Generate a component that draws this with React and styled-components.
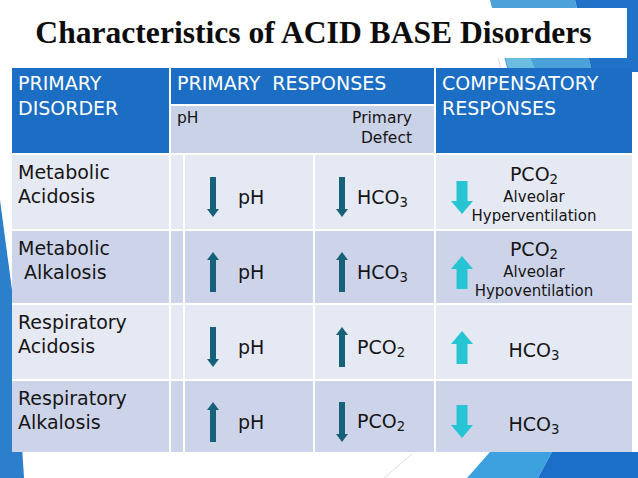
import React from "react";
import styled, { createGlobalStyle } from "styled-components";

const GlobalStyle = createGlobalStyle`
    * { box-sizing: border-box; }
    body {
        margin: 0;
        background: #fff;
    }
`;

const rows = [
    {
        name: ["Metabolic", "Acidosis"],
        ph: "down",
        defect: { dir: "down", chem: ["HCO", "3"] },
        comp: { dir: "down", chem: ["PCO", "2"], note: ["Alveolar", "Hyperventilation"] },
    },
    {
        name: ["Metabolic", " Alkalosis"],
        ph: "up",
        defect: { dir: "up", chem: ["HCO", "3"] },
        comp: { dir: "up", chem: ["PCO", "2"], note: ["Alveolar", "Hypoventilation"] },
    },
    {
        name: ["Respiratory", "Acidosis"],
        ph: "down",
        defect: { dir: "up", chem: ["PCO", "2"] },
        comp: { dir: "up", chem: ["HCO", "3"] },
    },
    {
        name: ["Respiratory", "Alkalosis"],
        ph: "up",
        defect: { dir: "down", chem: ["PCO", "2"] },
        comp: { dir: "down", chem: ["HCO", "3"] },
    },
];

function ThinArrow({ dir }) {
    const d = dir === "down"
        ? "M3 0 H9 V32 H12 L6 40 L0 32 H3 Z"
        : "M6 0 L12 8 H9 V40 H3 V8 H0 Z";
    return (
        <svg width="12" height="40" viewBox="0 0 12 40">
            <path d={d} fill="#17607a" />
        </svg>
    );
}

function FatArrow({ dir }) {
    const d = dir === "down"
        ? "M5.5 0 H16.5 V20 H22 L11 33 L0 20 H5.5 Z"
        : "M11 0 L22 13 H16.5 V33 H5.5 V13 H0 Z";
    return (
        <svg width="22" height="33" viewBox="0 0 22 33">
            <path d={d} fill="#27c5d3" />
        </svg>
    );
}

function Chem({ parts }) {
    return (
        <ChemLine>
            {parts[0]}
            <Sub>{parts[1]}</Sub>
        </ChemLine>
    );
}

function Decor() {
    return (
        <DecorSvg viewBox="0 0 638 478" width="638" height="478">
            {/* top right */}
            <polygon points="490,0 575,0 592,72 508,72" fill="#4aa2d8" />
            <polygon points="505,56 530,56 536,72 509,72" fill="#6cbde0" />
            <polygon points="575,0 638,0 638,72 592,72" fill="#1f72c7" />
            <line x1="497" y1="52" x2="501" y2="70" stroke="#d8dde3" strokeWidth="1" />
            {/* left wedge */}
            <polygon points="0,200 12,290 24,478 0,478" fill="#2c7fcb" />
            {/* bottom right */}
            <polygon points="490,452 552,452 538,478 467,478" fill="#3ca1de" />
            <polygon points="552,452 638,452 638,478 538,478" fill="#1b6fc8" />
            <line x1="384" y1="478" x2="412" y2="454" stroke="#dcdfe4" strokeWidth="1" />
        </DecorSvg>
    );
}

function App() {
    return (
        <>
            <GlobalStyle />
            <Slide>
                <Decor />
                <Content>
                    <TitleBand>
                        <Title>Characteristics of ACID BASE Disorders</Title>
                    </TitleBand>

                    <Table>
                        <HeadCell $col="1" $row="1 / span 2">
                            PRIMARY<br />DISORDER
                        </HeadCell>
                        <HeadCell $col="2 / span 3" $row="1">
                            PRIMARY&nbsp;&nbsp;RESPONSES
                        </HeadCell>
                        <SubHead>
                            <span>pH</span>
                            <SubRight>Primary<br />Defect</SubRight>
                        </SubHead>
                        <HeadCell $col="5" $row="1 / span 2">
                            COMPENSATORY<br />RESPONSES
                        </HeadCell>

                        {rows.map((r, i) => {
                            const shade = i % 2 === 1;
                            return (
                                <React.Fragment key={i}>
                                    <DisorderCell $shade={shade}>
                                        {r.name[0]}{"\n"}{r.name[1]}
                                    </DisorderCell>
                                    <Cell $shade={shade} />
                                    <ResponseCell $shade={shade} $pad={22} $gap={19}>
                                        <ThinArrow dir={r.ph} />
                                        <span>pH</span>
                                    </ResponseCell>
                                    <ResponseCell $shade={shade} $pad={21} $gap={9}>
                                        <ThinArrow dir={r.defect.dir} />
                                        <Chem parts={r.defect.chem} />
                                    </ResponseCell>
                                    <CompCell $shade={shade}>
                                        <CompArrow>
                                            <FatArrow dir={r.comp.dir} />
                                        </CompArrow>
                                        <CompText $withNote={!!r.comp.note}>
                                            <Chem parts={r.comp.chem} />
                                            {r.comp.note && r.comp.note.map((n) => (
                                                <Note key={n}>{n}</Note>
                                            ))}
                                        </CompText>
                                    </CompCell>
                                </React.Fragment>
                            );
                        })}
                    </Table>
                </Content>
            </Slide>
        </>
    );
}

const Slide = styled.div`
    position: relative;
    width: 638px;
    height: 478px;
    overflow: hidden;
    background: #fff;
    font-family: "DejaVu Sans", sans-serif;
    color: #151515;
`;

const DecorSvg = styled.svg`
    position: absolute;
    left: 0;
    top: 0;
    z-index: 0;
`;

const Content = styled.div`
    position: relative;
    z-index: 1;
    display: flex;
    flex-direction: column;
    padding: 8px 6px 0 12px;
`;

const TitleBand = styled.div`
    height: 50px;
    margin: 0 5px 0 -12px;
    background: #fff;
    display: flex;
    align-items: center;
    justify-content: center;
`;

const Title = styled.h1`
    margin: 0;
    font-family: "Liberation Serif", "Times New Roman", serif;
    font-weight: bold;
    font-size: 31.6px;
    color: #0d0d0d;
    white-space: nowrap;
`;

const Table = styled.div`
    margin-top: 10px;
    display: grid;
    grid-template-columns: 157px 12px 128px 119px 196px;
    grid-template-rows: 36px 47px 74px 72px 74px 71px;
    gap: 2px;
    background: #fff;
    font-size: 19px;
`;

const HeadCell = styled.div`
    grid-column: ${(p) => p.$col};
    grid-row: ${(p) => p.$row};
    background: #1b6ec4;
    color: #fff;
    line-height: 25px;
    padding: 3px 6px 0;
    white-space: nowrap;
`;

const SubHead = styled.div`
    grid-column: 2 / span 3;
    grid-row: 2;
    background: #cad2e8;
    display: flex;
    justify-content: space-between;
    padding: 2px 22px 0 6px;
    font-size: 15.5px;
    line-height: 20px;
`;

const SubRight = styled.span`
    text-align: right;
`;

const Cell = styled.div`
    background: ${(p) => (p.$shade ? "#cdd4e9" : "#e5e9f4")};
`;

const DisorderCell = styled(Cell)`
    padding: 5px 6px 0;
    line-height: 24px;
    white-space: pre;
`;

const ResponseCell = styled(Cell)`
    display: flex;
    align-items: center;
    padding: 10px 0 0 ${(p) => p.$pad}px;
    gap: ${(p) => p.$gap}px;
`;

const CompCell = styled(Cell)`
    display: grid;
    align-items: center;
    padding-top: 10px;
`;

const CompArrow = styled.div`
    grid-area: 1 / 1;
    justify-self: start;
    margin-left: 15px;
    display: flex;
`;

const CompText = styled.div`
    grid-area: 1 / 1;
    justify-self: center;
    display: flex;
    flex-direction: column;
    align-items: center;
    margin-top: ${(p) => (p.$withNote ? "-8px" : "6px")};
`;

const ChemLine = styled.span`
    display: block;
    line-height: 27px;
`;

const Note = styled.span`
    display: block;
    font-size: 15px;
    line-height: 19px;
`;

const Sub = styled.sub`
    font-size: 0.7em;
    vertical-align: -0.25em;
    line-height: 0;
`;

export default App;
